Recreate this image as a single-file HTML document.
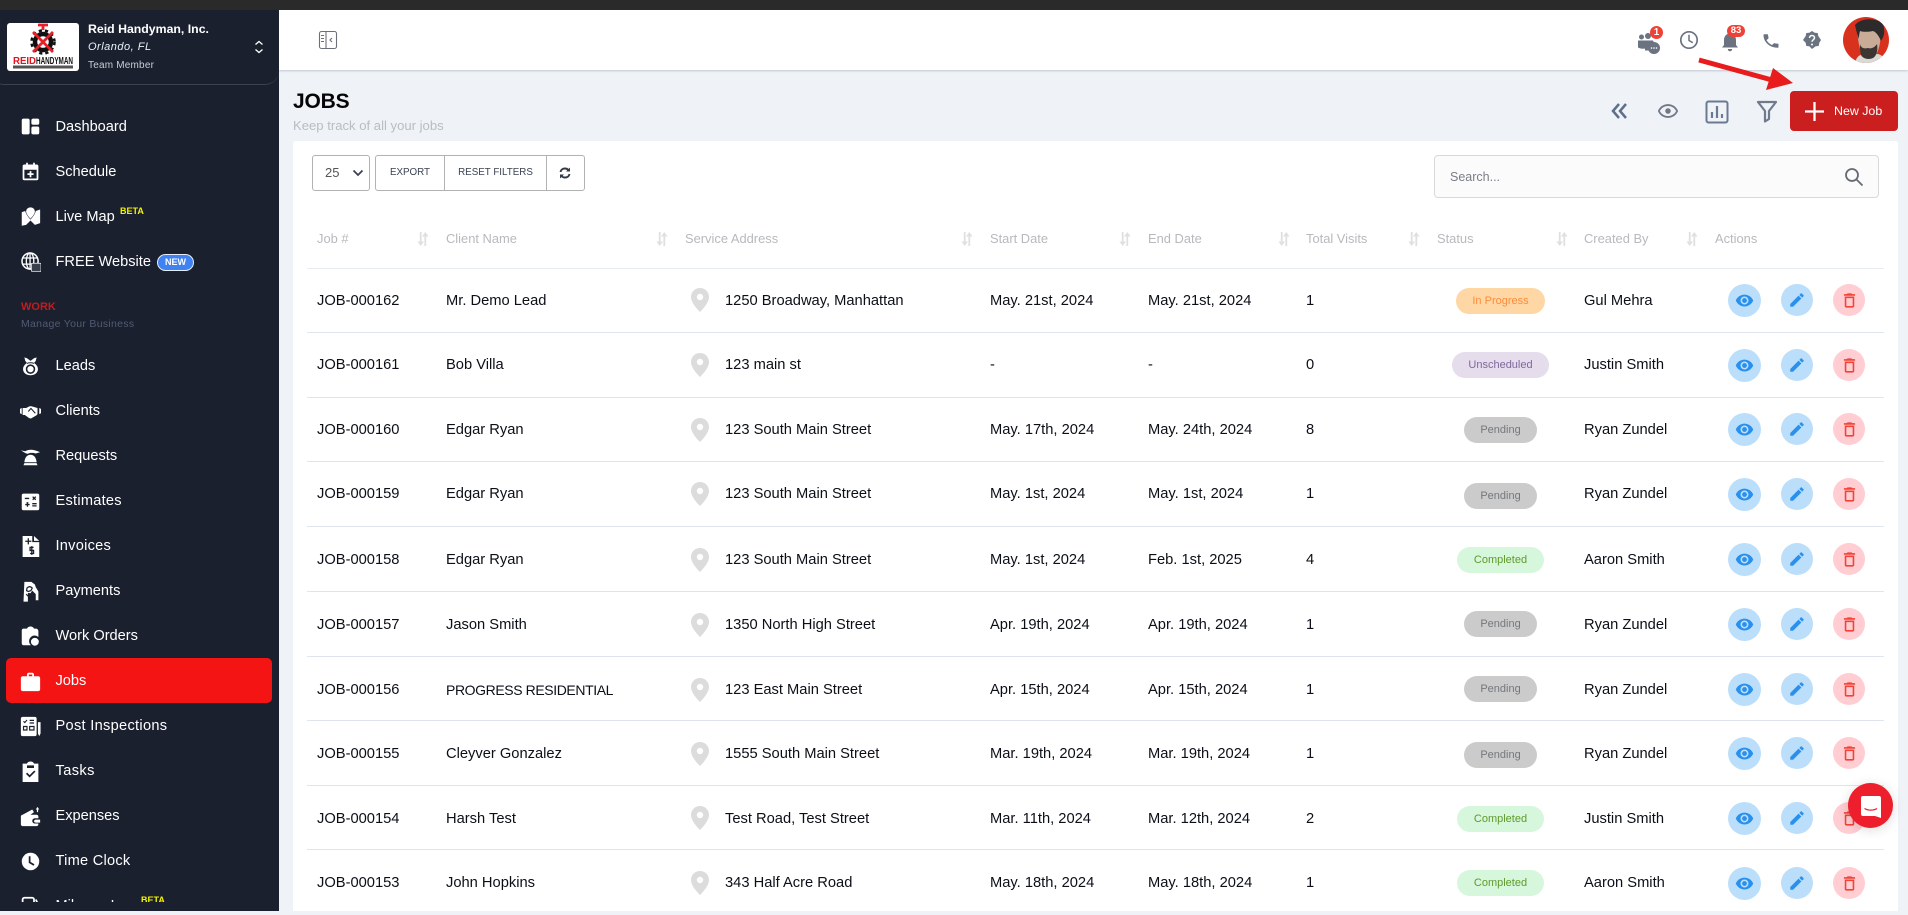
<!DOCTYPE html>
<html lang="en"><head><meta charset="utf-8"><title>Jobs</title>
<style>
*{box-sizing:border-box}
html,body{margin:0;padding:0;width:1908px;height:911px;overflow:hidden;background:#eff3f8;font-family:"Liberation Sans",Arial,sans-serif}
.a{position:absolute;white-space:nowrap}
#top{left:0;top:0;width:1908px;height:10px;background:#2a2a2a}
#side{left:0;top:10px;width:279px;height:901px;background:#1a202e}
#org{left:-10px;top:10px;width:289px;height:75px;background:#1a202e;border-bottom:1px solid #3c4250;border-radius:0 0 14px 14px}
.mi{position:absolute;left:55.5px;margin-top:1px;font-size:14.6px;color:#fff;line-height:20px;height:20px}
.ic{position:absolute;left:19.5px;margin-top:2.5px;width:21px;height:21px;fill:#fff}
#menu{position:absolute;left:0;top:0;width:279px;height:892px;overflow:hidden}
.sup{position:absolute;font-size:9px;font-weight:bold;color:#f4f400;line-height:10px}
#bar{left:279px;top:10px;width:1629px;height:60px;background:#fff;box-shadow:0 1px 2px rgba(60,70,90,.25)}
#card{left:293px;top:141px;width:1605px;height:770px;background:#fff;border-radius:3px 3px 0 0}
.btn{position:absolute;top:155px;height:36px;background:#fff;border:1px solid #b2b2b2;font-size:9.8px;color:#3b4252;line-height:34px;text-align:center}
.th{position:absolute;top:230px;font-size:12.9px;line-height:18px;color:#b7b9bd}
.so{position:absolute;top:232px;width:12px;height:14px}
.row{position:absolute;left:307px;width:1577px;border-bottom:1.5px solid #dfe5ee}
.c{position:absolute;margin-top:1px;font-size:14.7px;line-height:20px;color:#0c0f18;white-space:nowrap}
.pin{position:absolute;left:382px;width:22px;height:26px;fill:#dcdcdc}
.b{position:absolute;height:26px;border-radius:13px;font-size:11px;line-height:26px;text-align:center}
.ip{left:1149px;width:89px;background:#fed7a5;color:#fb8c3c}
.un{left:1145px;width:97px;background:#e5dcec;color:#80689c}
.pe{left:1157px;width:73px;background:#cbcbcb;color:#74787e}
.co{left:1150px;width:87px;background:#d7f7dc;color:#5e9a2c}
.ac{position:absolute;border-radius:50%;display:flex;align-items:center;justify-content:center}
.e{left:1421px;width:33px;height:33px;background:#bbdefb}
.p{left:1474px;width:32px;height:32px;background:#bbdefb}
.t{left:1526px;width:32px;height:32px;background:#ffcdd2}
.e svg{width:19px;height:19px;fill:#2a90ee}
.p svg{width:18px;height:18px;fill:#2a90ee}
.t svg{width:19px;height:19px;fill:#f44336}
</style></head><body>
<svg width="0" height="0" style="position:absolute"><defs>
<symbol id="eye" viewBox="0 0 24 24"><path d="M12 4.5C7 4.5 2.73 7.61 1 12c1.73 4.39 6 7.5 11 7.5s9.27-3.11 11-7.5c-1.73-4.39-6-7.5-11-7.5zM12 17c-2.76 0-5-2.24-5-5s2.24-5 5-5 5 2.24 5 5-2.24 5-5 5zm0-8c-1.66 0-3 1.34-3 3s1.34 3 3 3 3-1.34 3-3-1.34-3-3-3z"/></symbol>
<symbol id="pen" viewBox="0 0 24 24"><path d="M3 17.25V21h3.75L17.81 9.94l-3.75-3.75L3 17.25zM20.71 7.04c.39-.39.39-1.02 0-1.41l-2.34-2.34c-.39-.39-1.02-.39-1.41 0l-1.83 1.83 3.75 3.75 1.83-1.83z"/></symbol>
<symbol id="tr" viewBox="0 0 24 24"><path d="M6 19c0 1.1.9 2 2 2h8c1.1 0 2-.9 2-2V7H6v12zM8 9h8v10H8V9zm7.5-5l-1-1h-5l-1 1H5v2h14V4z"/></symbol>
<symbol id="pinp" viewBox="0 0 22 26"><path d="M11 1C5.8 1 2 5 2 10c0 5.5 6 12 9 15 3-3 9-9.500 9-15 0-5-3.800-9-9-9zm0 12.200a3.200 3.200 0 1 1 0-6.400 3.200 3.200 0 0 1 0 6.400z"/></symbol>
<symbol id="srt" viewBox="0 0 12 14"><path d="M2.800 0h1.800v9.500H7L3.700 14 .4 9.500h2.400zM7.400 14h1.800V4.500h2.400L8.300 0 5 4.500h2.400z" fill="#e0e0e0"/></symbol>
</defs></svg>

<div class="a" id="top"></div>
<div class="a" id="side">
<div id="menu">
<svg class="ic" style="top:103.500px" viewBox="0 0 24 24"><rect x="2" y="3" width="9" height="18" rx="2"/><rect x="13" y="3" width="9" height="7" rx="2"/><rect x="13" y="12" width="9" height="9" rx="2"/></svg>
<div class="mi" style="top:105.500px">Dashboard</div>
<svg class="ic" style="top:148.500px" viewBox="0 0 24 24"><path d="M5 4h2V2h2v2h6V2h2v2h2a2 2 0 0 1 2 2v14a2 2 0 0 1-2 2H5a2 2 0 0 1-2-2V6a2 2 0 0 1 2-2zm0 6v10h14V10zm6 1.500h2V14h2.500v2H13v2.500h-2V16H8.500v-2H11z"/></svg>
<div class="mi" style="top:150.500px">Schedule</div>
<svg class="ic" style="top:193.500px" viewBox="0 0 24 24"><path d="M12 1.500c3 0 5 2.200 5 4.800 0 2.400-2.800 6-5 8.200-2.200-2.200-5-5.800-5-8.200 0-2.600 2-4.800 5-4.800zM2 7l4-1.300c.5 3 3.500 7 6 9.800 2.500-2.800 5.500-6.800 6-9.800L23 4v15.500l-6 2-5-5-5 5-5 1z"/></svg>
<div class="mi" style="top:195.500px">Live Map</div><div class="sup" style="left:120px;top:196px">BETA</div>
<svg class="ic" style="top:238.500px" viewBox="0 0 24 24"><circle cx="11.500" cy="11.500" r="9.200" fill="none" stroke="#fff" stroke-width="1.700"/><ellipse cx="11.500" cy="11.500" rx="4.300" ry="9.200" fill="none" stroke="#fff" stroke-width="1.500"/><path d="M2.500 8h18M2.500 15h18M11.500 2v19" stroke="#fff" stroke-width="1.500"/><rect x="13" y="14" width="11" height="9.500" rx="1" fill="#3a3f4c" stroke="#fff" stroke-width=".8"/></svg>
<div class="mi" style="top:240.500px">FREE Website</div>
<div class="a" style="left:157px;top:244px;width:37px;height:17px;border-radius:9px;background:#3f82f2;border:1px solid #e6eefc;color:#fff;font-size:9px;font-weight:bold;line-height:15px;text-align:center">NEW</div>
<div class="a" style="left:21px;top:290px;font-size:11px;font-weight:bold;color:#c01d22;line-height:14px">WORK</div>
<div class="a" style="left:21px;top:307px;font-size:10.500px;color:#515b73;line-height:14px;letter-spacing:.3px">Manage Your Business</div>

<svg class="ic" style="top:343px" viewBox="0 0 24 24"><path d="M5 1.500l3 1 4 3 4-3 3-1-1 4-2 2.500c2.500 1.500 4.500 4 4.500 7 0 4-3.500 7-8.500 7s-8.500-3-8.500-7c0-3 2-5.500 4.500-7L6 5.500z"/><circle cx="12" cy="15" r="4.500" fill="none" stroke="#1a202e" stroke-width="1.800"/><path d="M8 8.500c2-1 6-1 8 0" stroke="#1a202e" stroke-width="1.200" fill="none"/></svg>
<div class="mi" style="top:345px">Leads</div>
<svg class="ic" style="top:388px" viewBox="0 0 24 24"><path d="M0 9l2-1v7l-2-1zM22 8l2 1v5l-2 1zM3 8h4l4-2 2 0 7 2v7l-1.500 1.500-6 3.500-2-.5-5-3.500H3zM9 11l3-3 3 3 4 4-1 1-5-4.500-2 1.500z"/><path d="M9.500 12l3-3.500 5 5.500" stroke="#1a202e" stroke-width="1.200" fill="none"/></svg>
<div class="mi" style="top:390px">Clients</div>
<svg class="ic" style="top:433px" viewBox="0 0 24 24"><path d="M5 19.500h14l1 2.500H4zM12 10c3.800 0 6.500 3 7 8.500H5c.5-5.500 3.200-8.500 7-8.500zM1 5l5 1c4-2.500 9-2.500 17 1l-5 1.500c-3-1-7-1-9.500.5L6 8z"/></svg>
<div class="mi" style="top:435px">Requests</div>
<svg class="ic" style="top:478px" viewBox="0 0 24 24"><path d="M4 3h16a2 2 0 0 1 2 2v15a2 2 0 0 1-2 2H4a2 2 0 0 1-2-2V5a2 2 0 0 1 2-2z"/><path d="M5.500 8.500h5M7.500 13.500h2M6 15.500h5M8.500 13v5M14 14.500h5M14 17h5M14.500 6.500l3.500 3.500M18 6.500L14.500 10" stroke="#1a202e" stroke-width="1.500" fill="none"/></svg>
<div class="mi" style="top:480px;letter-spacing:.25px">Estimates</div>
<svg class="ic" style="top:523px" viewBox="0 0 24 24"><path d="M3 0h11v7h8v17H3z"/><path d="M16 0l6 5.500h-6z"/><path d="M6 6h7M9.500 2.500v7" stroke="#1a202e" stroke-width="1.500"/><path d="M15.500 13h-4v3.500h4V20h-4M13.500 11.500v10" stroke="#1a202e" stroke-width="1.500" fill="none"/></svg>
<div class="mi" style="top:525px;letter-spacing:.25px">Invoices</div>
<svg class="ic" style="top:568px" viewBox="0 0 24 24"><path d="M5 1h8l4 3 1 3 3 5v10h-3v-7l-4-4-2 3-3-.5v10H4z"/><path d="M8 8c2-2 4-2 6 0l-1.500 3-3 1-2-1zM7 15l3 3" stroke="#1a202e" stroke-width="1.400" fill="none"/></svg>
<div class="mi" style="top:570px">Payments</div>
<svg class="ic" style="top:613px" viewBox="0 0 24 24"><path d="M4 3h4c.5-1.500 2-2.500 4-2.500S15.500 1.500 16 3h2c1.500 0 3 1 3 3v6.500a6 6 0 0 0-8.500 9.500H4c-1 0-2-1-2-2V5c0-1 1-2 2-2z"/><circle cx="17" cy="18" r="4.500"/></svg>
<div class="mi" style="top:615px">Work Orders</div>

<div class="a" style="left:6px;top:648px;width:266px;height:45px;background:#f51414;border-radius:5px"></div>
<svg class="ic" style="top:658px" viewBox="0 0 24 24"><path d="M8 6V4c0-1 1-2 2-2h4c1 0 2 1 2 2v2h5c1 0 2 1 2 2v13c0 1-1 2-2 2H3c-1 0-2-1-2-2V8c0-1 1-2 2-2zm2 0h4V4h-4z"/></svg>
<div class="mi" style="top:660px">Jobs</div>
<svg class="ic" style="top:703px" viewBox="0 0 24 24"><path d="M3 1h14a2 2 0 0 1 2 2v18a2 2 0 0 1-2 2H3a2 2 0 0 1-2-2V3a2 2 0 0 1 2-2z"/><path d="M20.500 7h3v13l-1.500 3-1.500-3z"/><path d="M4 6l1.500 1.500L8 4.500M11 5h5M11 8h5M4 12h4v4H4zM11 12h5v4h-5z" stroke="#1a202e" stroke-width="1.300" fill="none"/></svg>
<div class="mi" style="top:705px;letter-spacing:.3px">Post Inspections</div>
<svg class="ic" style="top:748px" viewBox="0 0 24 24"><path d="M8 3c.5-1.500 2-2.500 4-2.500S15.500 1.500 16 3h5v21H3V3zm0 2v3h8V5z"/><path d="M7.500 14l3.500 3.500 6-6" stroke="#1a202e" stroke-width="2" fill="none"/></svg>
<div class="mi" style="top:750px;letter-spacing:.4px">Tasks</div>
<svg class="ic" style="top:793px" viewBox="0 0 24 24"><path d="M3 10l11-6 2 3-4 3h7c1 0 2 1 2 2v2h-4a3 3 0 0 0 0 6h4v1c0 1-1 2-2 2H3c-1 0-2-1-2-2V12c0-1 1-2 2-2zM18 15.500h5v3.500h-5c-1 0-2-.700-2-1.700s1-1.800 2-1.800zM20 1l2 3h-1.300v3h-1.400V4H18z"/></svg>
<div class="mi" style="top:795px">Expenses</div>
<svg class="ic" style="top:838px" viewBox="0 0 24 24"><circle cx="12" cy="12" r="10"/><path d="M11 6v7l5 3" stroke="#1a202e" stroke-width="2" fill="none"/></svg>
<div class="mi" style="top:840px;letter-spacing:.25px">Time Clock</div>
<svg class="ic" style="top:883px" viewBox="0 0 24 24"><rect x="3" y="2" width="13" height="20" rx="2" fill="none" stroke="#fff" stroke-width="2"/><path d="M18 4l4 8" stroke="#fff" stroke-width="2"/></svg>
<div class="mi" style="top:885px">Mileage Log</div><div class="sup" style="left:141px;top:885px">BETA</div>
</div>
</div>
<div class="a" id="org"></div>
<div class="a" style="left:7px;top:23px;width:72px;height:48px;background:#fff;border-radius:3px;overflow:hidden">
<svg width="72" height="48" viewBox="0 0 72 48" style="position:absolute;left:0;top:0">
<circle cx="36" cy="19" r="8" fill="none" stroke="#111" stroke-width="4.500"/><circle cx="36" cy="19" r="11.500" fill="none" stroke="#111" stroke-width="2.500" stroke-dasharray="3.200 3"/>
<path d="M26 9l20 20M46 9L26 29M31 2h10M36 2v5" stroke="#e8202a" stroke-width="2.800" fill="none"/>
<text x="6" y="41" font-family="Liberation Sans,sans-serif" font-weight="bold" font-size="10.500" fill="#e0141c" textLength="23" lengthAdjust="spacingAndGlyphs">REID</text>
<text x="29" y="41" font-family="Liberation Sans,sans-serif" font-weight="bold" font-size="10.500" fill="#111" textLength="37" lengthAdjust="spacingAndGlyphs">HANDYMAN</text>
<rect x="6" y="42.500" width="60" height="3" fill="#555"/>
</svg></div>
<div class="a" style="left:88px;top:21px;font-size:12.300px;font-weight:bold;color:#fff;line-height:16px">Reid Handyman, Inc.</div>
<div class="a" style="left:88px;top:39px;font-size:11px;font-style:italic;color:#eaf2fb;line-height:16px;letter-spacing:.5px">Orlando, FL</div>
<div class="a" style="left:88px;top:58px;font-size:10px;color:#c9ced6;line-height:15px;letter-spacing:.2px">Team Member</div>
<svg class="a" style="left:253px;top:40px" width="12" height="14" viewBox="0 0 12 14"><path d="M2.500 4.500L6 1.500l3.500 3M2.500 9.500L6 12.500l3.500-3" stroke="#fff" stroke-width="1.300" fill="none"/></svg>

<div class="a" id="bar"></div>
<svg class="a" style="left:318px;top:30px" width="20" height="20" viewBox="0 0 20 20"><rect x="1.500" y="1.500" width="17" height="17" rx="2" fill="none" stroke="#6a7079" stroke-width="1.100"/><path d="M8 1.500v17M3 5.500h3M3 8.500h3M3 11.500h3M14 8l-2 2 2 2" stroke="#6a7079" stroke-width="1.100" fill="none"/></svg>

<!-- top icons -->
<svg class="a" style="left:1636px;top:28px" width="26" height="26" viewBox="0 0 26 26" fill="#6b7280"><circle cx="5.500" cy="9" r="2.500"/><circle cx="12" cy="8" r="3"/><path d="M2 12.500h7v8c-3 .5-5 0-7-1zM9 12.500h8l1 2c-3 1-6 4-5 8H9z"/><circle cx="18" cy="20" r="6" /><circle cx="15.500" cy="20" r=".8" fill="#fff"/><circle cx="18" cy="20" r=".8" fill="#fff"/><circle cx="20.500" cy="20" r=".8" fill="#fff"/></svg>
<div class="a" style="left:1650px;top:26px;width:13px;height:13px;border-radius:50%;background:#ef4136;color:#fff;font-size:10px;font-weight:bold;line-height:13px;text-align:center">1</div>
<svg class="a" style="left:1679px;top:30px" width="20" height="20" viewBox="0 0 20 20"><circle cx="10" cy="10" r="8.200" fill="none" stroke="#6b7280" stroke-width="1.700"/><path d="M10 4.800V10.500l3.800 2.200" stroke="#6b7280" stroke-width="1.500" fill="none"/></svg>
<svg class="a" style="left:1721px;top:32px" width="18" height="20" viewBox="0 0 18 20" fill="#6b7280"><path d="M9 1.500c3.500 0 6 2.700 6 6.500v5l2 2.500H1L3 13V8c0-3.800 2.500-6.500 6-6.500zM6.800 17h4.400c0 1.300-1 2.300-2.200 2.300S6.800 18.300 6.800 17z"/></svg>
<div class="a" style="left:1727px;top:25px;width:18px;height:12px;border-radius:6px;background:#ef4136;color:#fff;font-size:9.500px;font-weight:bold;line-height:12px;text-align:center">83</div>
<svg class="a" style="left:1761px;top:32px" width="20" height="18" viewBox="0 0 24 24" preserveAspectRatio="none"><path fill="#6b7280" d="M6.620 10.790c1.440 2.830 3.760 5.140 6.590 6.590l2.200-2.200c.27-.27.67-.36 1.020-.24 1.120.37 2.330.57 3.570.57.550 0 1 .45 1 1V20c0 .55-.45 1-1 1-9.390 0-17-7.610-17-17 0-.55.450-1 1-1h3.500c.55 0 1 .45 1 1 0 1.250.2 2.450.57 3.570.11.350.03.740-.25 1.020l-2.200 2.200z"/></svg>
<svg class="a" style="left:1803px;top:31px" width="18" height="18" viewBox="0 0 18 18"><path fill="#6b7280" d="M9 0l2.700 1.700 3 .3.600 3L18 9l-1.700 2.700-.600 3.300-3 .3L9 18l-2.700-2.700-3-.3-.600-3.300L0 9l2.700-4 .600-3 3-.3z"/><path d="M6.500 7c0-1.500 1-2.500 2.500-2.500s2.500 1 2.500 2.300c0 2-2.500 2-2.500 4" stroke="#fff" stroke-width="1.500" fill="none"/><circle cx="9" cy="13.500" r="1" fill="#fff"/></svg>
<svg class="a" style="left:1843px;top:17px" width="46" height="46" viewBox="0 0 46 46"><defs><clipPath id="av"><circle cx="23" cy="23" r="23"/></clipPath></defs><circle cx="23" cy="23" r="23" fill="#d8321f"/><g clip-path="url(#av)"><path d="M12 46c1-6 5-9 10-9h13c4 1 8 5 9 9z" fill="#d8dad6"/><path d="M15 12c3 0 18-1 22 5 1 5 0 12-3 19-4 4-13 3-16-2-2-5-4-14-3-22z" fill="#c9ac98"/><path d="M12 8c4-5 12-7 20-5 6 1 9 4 9 9 1 5-1 9-3 12-2-5-5-9-8-10-5 1-10 1-13 0-1 3-1 6-1 8-2-5-3-9-4-14z" fill="#2c2a2a"/><path d="M17 27c1 4 4 5 8 4 3 1 6 0 9-4 1 5 0 12-4 14-4 2-10 1-12-3-1-3-1-7-1-11z" fill="#3c3532"/></g></svg>

<!-- page head -->
<div class="a" style="left:293px;top:89px;font-size:21px;font-weight:bold;color:#060606;line-height:25px;letter-spacing:-.2px">JOBS</div>
<div class="a" style="left:293px;top:118px;font-size:13.100px;color:#b9bcc1;line-height:16px">Keep track of all your jobs</div>
<svg class="a" style="left:1610px;top:101px" width="19" height="20" viewBox="0 0 19 20"><path d="M9 3l-6 7 6 7M16 3l-6 7 6 7" stroke="#5f6f89" stroke-width="2.500" fill="none"/></svg>
<svg class="a" style="left:1657px;top:100px" width="22" height="22" viewBox="0 0 24 24"><path fill="#6f7885" d="M12 4.500C7 4.500 2.730 7.610 1 12c1.730 4.390 6 7.500 11 7.500s9.270-3.110 11-7.500c-1.730-4.390-6-7.500-11-7.500zM12 17.500c-3.900 0-7.300-2.200-8.900-5.500C4.700 8.700 8.100 6.500 12 6.500s7.300 2.200 8.900 5.500c-1.600 3.300-5 5.500-8.900 5.500zM12 9a3 3 0 1 0 0 6 3 3 0 0 0 0-6z"/></svg>
<svg class="a" style="left:1705px;top:100px" width="24" height="24" viewBox="0 0 24 24"><rect x="1.500" y="1.500" width="21" height="21" rx="2" fill="none" stroke="#6a7a91" stroke-width="2"/><path d="M7 18v-6M12 18V6M17 18v-4" stroke="#6a7a91" stroke-width="2.200"/></svg>
<svg class="a" style="left:1756px;top:99px" width="22" height="24" viewBox="0 0 22 24"><path d="M2 3h18l-7 9v8l-4 2.500V12z" stroke="#6f7b8c" stroke-width="2.200" fill="none" stroke-linejoin="round"/></svg>
<div class="a" style="left:1790px;top:91px;width:108px;height:40px;background:#cb1f1f;border-radius:4px"></div>
<svg class="a" style="left:1805px;top:102px" width="19" height="19" viewBox="0 0 19 19"><path d="M9.500 0v19M0 9.500h19" stroke="#fff" stroke-width="2.300"/></svg>
<div class="a" style="left:1834px;top:103px;font-size:12.400px;font-weight:normal;color:#fff;line-height:16px">New Job</div>
<svg class="a" style="left:1695px;top:55px" width="102" height="40" viewBox="1695 55 102 40"><path d="M1699 60l73 20" stroke="#e81c1c" stroke-width="5"/><path d="M1793 83l-27 7 7-22z" fill="#e81c1c"/></svg>

<!-- card -->
<div class="a" id="card"></div>
<div class="btn" style="left:312px;width:58px;border-radius:3px;font-size:13px;color:#555;text-align:left;padding-left:12px">25</div>
<svg class="a" style="left:352px;top:169px" width="12" height="8" viewBox="0 0 12 8"><path d="M1.500 1.500L6 6l4.500-4.500" stroke="#3b4252" stroke-width="1.800" fill="none"/></svg>
<div class="btn" style="left:375px;width:70px;border-radius:3px 0 0 3px">EXPORT</div>
<div class="btn" style="left:444px;width:103px">RESET FILTERS</div>
<div class="btn" style="left:546px;width:39px;border-radius:0 3px 3px 0"></div>
<svg class="a" style="left:559px;top:167px" width="12" height="12" viewBox="0 0 12 12"><path d="M1.500 5c.4-2.200 2.200-3.500 4.500-3.500 1.500 0 2.800.7 3.500 1.800M10.500 7c-.4 2.200-2.200 3.500-4.500 3.500-1.500 0-2.800-.7-3.500-1.800" stroke="#333a48" stroke-width="1.900" fill="none"/><path d="M11 .5v4H7zM1 11.500v-4h4z" fill="#333a48"/></svg>

<div class="a" style="left:1434px;top:155px;width:445px;height:43px;background:#fbfbfc;border:1px solid #d9d9dc;border-radius:4px"></div>
<div class="a" style="left:1450px;top:169px;font-size:12.500px;color:#7a7e86;line-height:17px">Search...</div>
<svg class="a" style="left:1844px;top:167px" width="20" height="20" viewBox="0 0 20 20"><circle cx="8" cy="8" r="6" fill="none" stroke="#666b73" stroke-width="1.800"/><path d="M12.500 12.500L18.500 18.500" stroke="#666b73" stroke-width="1.800"/></svg>

<div class="th" style="left:317px">Job #</div><svg class="so" style="left:417px"><use href="#srt"/></svg>
<div class="th" style="left:446px">Client Name</div><svg class="so" style="left:656px"><use href="#srt"/></svg>
<div class="th" style="left:685px">Service Address</div><svg class="so" style="left:961px"><use href="#srt"/></svg>
<div class="th" style="left:990px">Start Date</div><svg class="so" style="left:1119px"><use href="#srt"/></svg>
<div class="th" style="left:1148px">End Date</div><svg class="so" style="left:1278px"><use href="#srt"/></svg>
<div class="th" style="left:1306px">Total Visits</div><svg class="so" style="left:1408px"><use href="#srt"/></svg>
<div class="th" style="left:1437px">Status</div><svg class="so" style="left:1556px"><use href="#srt"/></svg>
<div class="th" style="left:1584px">Created By</div><svg class="so" style="left:1686px"><use href="#srt"/></svg>
<div class="th" style="left:1715px">Actions</div>
<div class="a" style="left:307px;top:268px;width:1577px;height:1px;background:#e8ebf0"></div>

<div class="row" style="top:269px;height:64px"><div class="c" style="left:10px;top:21px">JOB-000162</div><div class="c" style="left:139px;top:21px">Mr. Demo Lead</div><svg class="pin" style="top:18px"><use href="#pinp"/></svg><div class="c" style="left:418px;top:21px">1250 Broadway, Manhattan</div><div class="c" style="left:683px;top:21px">May. 21st, 2024</div><div class="c" style="left:841px;top:21px">May. 21st, 2024</div><div class="c" style="left:999px;top:21px">1</div><div class="b ip" style="top:19px">In Progress</div><div class="c" style="left:1277px;top:21px">Gul Mehra</div><div class="ac e" style="top:15px"><svg><use href="#eye"/></svg></div><div class="ac p" style="top:15px"><svg><use href="#pen"/></svg></div><div class="ac t" style="top:15px"><svg><use href="#tr"/></svg></div></div>

<div class="row" style="top:333px;height:65px"><div class="c" style="left:10px;top:21px">JOB-000161</div><div class="c" style="left:139px;top:21px">Bob Villa</div><svg class="pin" style="top:19px"><use href="#pinp"/></svg><div class="c" style="left:418px;top:21px">123 main st</div><div class="c" style="left:683px;top:21px">-</div><div class="c" style="left:841px;top:21px">-</div><div class="c" style="left:999px;top:21px">0</div><div class="b un" style="top:19px">Unscheduled</div><div class="c" style="left:1277px;top:21px">Justin Smith</div><div class="ac e" style="top:16px"><svg><use href="#eye"/></svg></div><div class="ac p" style="top:16px"><svg><use href="#pen"/></svg></div><div class="ac t" style="top:16px"><svg><use href="#tr"/></svg></div></div>

<div class="row" style="top:398px;height:64px"><div class="c" style="left:10px;top:21px">JOB-000160</div><div class="c" style="left:139px;top:21px">Edgar Ryan</div><svg class="pin" style="top:19px"><use href="#pinp"/></svg><div class="c" style="left:418px;top:21px">123 South Main Street</div><div class="c" style="left:683px;top:21px">May. 17th, 2024</div><div class="c" style="left:841px;top:21px">May. 24th, 2024</div><div class="c" style="left:999px;top:21px">8</div><div class="b pe" style="top:19px">Pending</div><div class="c" style="left:1277px;top:21px">Ryan Zundel</div><div class="ac e" style="top:15px"><svg><use href="#eye"/></svg></div><div class="ac p" style="top:15px"><svg><use href="#pen"/></svg></div><div class="ac t" style="top:15px"><svg><use href="#tr"/></svg></div></div>

<div class="row" style="top:462px;height:65px"><div class="c" style="left:10px;top:21px">JOB-000159</div><div class="c" style="left:139px;top:21px">Edgar Ryan</div><svg class="pin" style="top:19px"><use href="#pinp"/></svg><div class="c" style="left:418px;top:21px">123 South Main Street</div><div class="c" style="left:683px;top:21px">May. 1st, 2024</div><div class="c" style="left:841px;top:21px">May. 1st, 2024</div><div class="c" style="left:999px;top:21px">1</div><div class="b pe" style="top:21px">Pending</div><div class="c" style="left:1277px;top:21px">Ryan Zundel</div><div class="ac e" style="top:16px"><svg><use href="#eye"/></svg></div><div class="ac p" style="top:16px"><svg><use href="#pen"/></svg></div><div class="ac t" style="top:16px"><svg><use href="#tr"/></svg></div></div>

<div class="row" style="top:527px;height:65px"><div class="c" style="left:10px;top:22px">JOB-000158</div><div class="c" style="left:139px;top:22px">Edgar Ryan</div><svg class="pin" style="top:20px"><use href="#pinp"/></svg><div class="c" style="left:418px;top:22px">123 South Main Street</div><div class="c" style="left:683px;top:22px">May. 1st, 2024</div><div class="c" style="left:841px;top:22px">Feb. 1st, 2025</div><div class="c" style="left:999px;top:22px">4</div><div class="b co" style="top:20px">Completed</div><div class="c" style="left:1277px;top:22px">Aaron Smith</div><div class="ac e" style="top:16px"><svg><use href="#eye"/></svg></div><div class="ac p" style="top:16px"><svg><use href="#pen"/></svg></div><div class="ac t" style="top:16px"><svg><use href="#tr"/></svg></div></div>

<div class="row" style="top:592px;height:65px"><div class="c" style="left:10px;top:22px">JOB-000157</div><div class="c" style="left:139px;top:22px">Jason Smith</div><svg class="pin" style="top:20px"><use href="#pinp"/></svg><div class="c" style="left:418px;top:22px">1350 North High Street</div><div class="c" style="left:683px;top:22px">Apr. 19th, 2024</div><div class="c" style="left:841px;top:22px">Apr. 19th, 2024</div><div class="c" style="left:999px;top:22px">1</div><div class="b pe" style="top:19px">Pending</div><div class="c" style="left:1277px;top:22px">Ryan Zundel</div><div class="ac e" style="top:16px"><svg><use href="#eye"/></svg></div><div class="ac p" style="top:16px"><svg><use href="#pen"/></svg></div><div class="ac t" style="top:16px"><svg><use href="#tr"/></svg></div></div>

<div class="row" style="top:657px;height:64px"><div class="c" style="left:10px;top:22px">JOB-000156</div><div class="c" style="left:139px;top:22px;font-size:14px;letter-spacing:-.4px">PROGRESS RESIDENTIAL</div><svg class="pin" style="top:20px"><use href="#pinp"/></svg><div class="c" style="left:418px;top:22px">123 East Main Street</div><div class="c" style="left:683px;top:22px">Apr. 15th, 2024</div><div class="c" style="left:841px;top:22px">Apr. 15th, 2024</div><div class="c" style="left:999px;top:22px">1</div><div class="b pe" style="top:19px">Pending</div><div class="c" style="left:1277px;top:22px">Ryan Zundel</div><div class="ac e" style="top:16px"><svg><use href="#eye"/></svg></div><div class="ac p" style="top:16px"><svg><use href="#pen"/></svg></div><div class="ac t" style="top:16px"><svg><use href="#tr"/></svg></div></div>

<div class="row" style="top:721px;height:65px"><div class="c" style="left:10px;top:22px">JOB-000155</div><div class="c" style="left:139px;top:22px">Cleyver Gonzalez</div><svg class="pin" style="top:20px"><use href="#pinp"/></svg><div class="c" style="left:418px;top:22px">1555 South Main Street</div><div class="c" style="left:683px;top:22px">Mar. 19th, 2024</div><div class="c" style="left:841px;top:22px">Mar. 19th, 2024</div><div class="c" style="left:999px;top:22px">1</div><div class="b pe" style="top:21px">Pending</div><div class="c" style="left:1277px;top:22px">Ryan Zundel</div><div class="ac e" style="top:16px"><svg><use href="#eye"/></svg></div><div class="ac p" style="top:16px"><svg><use href="#pen"/></svg></div><div class="ac t" style="top:16px"><svg><use href="#tr"/></svg></div></div>

<div class="row" style="top:786px;height:64px"><div class="c" style="left:10px;top:22px">JOB-000154</div><div class="c" style="left:139px;top:22px">Harsh Test</div><svg class="pin" style="top:19px"><use href="#pinp"/></svg><div class="c" style="left:418px;top:22px">Test Road, Test Street</div><div class="c" style="left:683px;top:22px">Mar. 11th, 2024</div><div class="c" style="left:841px;top:22px">Mar. 12th, 2024</div><div class="c" style="left:999px;top:22px">2</div><div class="b co" style="top:20px">Completed</div><div class="c" style="left:1277px;top:22px">Justin Smith</div><div class="ac e" style="top:16px"><svg><use href="#eye"/></svg></div><div class="ac p" style="top:16px"><svg><use href="#pen"/></svg></div><div class="ac t" style="top:16px"><svg><use href="#tr"/></svg></div></div>

<div class="row" style="top:850px;height:65px;border-bottom:0"><div class="c" style="left:10px;top:22px">JOB-000153</div><div class="c" style="left:139px;top:22px">John Hopkins</div><svg class="pin" style="top:20px"><use href="#pinp"/></svg><div class="c" style="left:418px;top:22px">343 Half Acre Road</div><div class="c" style="left:683px;top:22px">May. 18th, 2024</div><div class="c" style="left:841px;top:22px">May. 18th, 2024</div><div class="c" style="left:999px;top:22px">1</div><div class="b co" style="top:20px">Completed</div><div class="c" style="left:1277px;top:22px">Aaron Smith</div><div class="ac e" style="top:17px"><svg><use href="#eye"/></svg></div><div class="ac p" style="top:17px"><svg><use href="#pen"/></svg></div><div class="ac t" style="top:17px"><svg><use href="#tr"/></svg></div></div>

<div class="a" style="left:1848px;top:783px;width:45px;height:45px;border-radius:50%;background:#ee1f2d;box-shadow:0 2px 12px rgba(0,0,0,.14)">
<svg width="45" height="45" viewBox="0 0 45 45"><path d="M15 13h16a2 2 0 0 1 2 2v20l-6-2H15a2 2 0 0 1-2-2V15a2 2 0 0 1 2-2z" fill="#fff"/><path d="M16.500 25.500c3.500 2.200 9 2.200 12.500 0" stroke="#ee1f2d" stroke-width="1.300" fill="none"/></svg></div>
</body></html>
